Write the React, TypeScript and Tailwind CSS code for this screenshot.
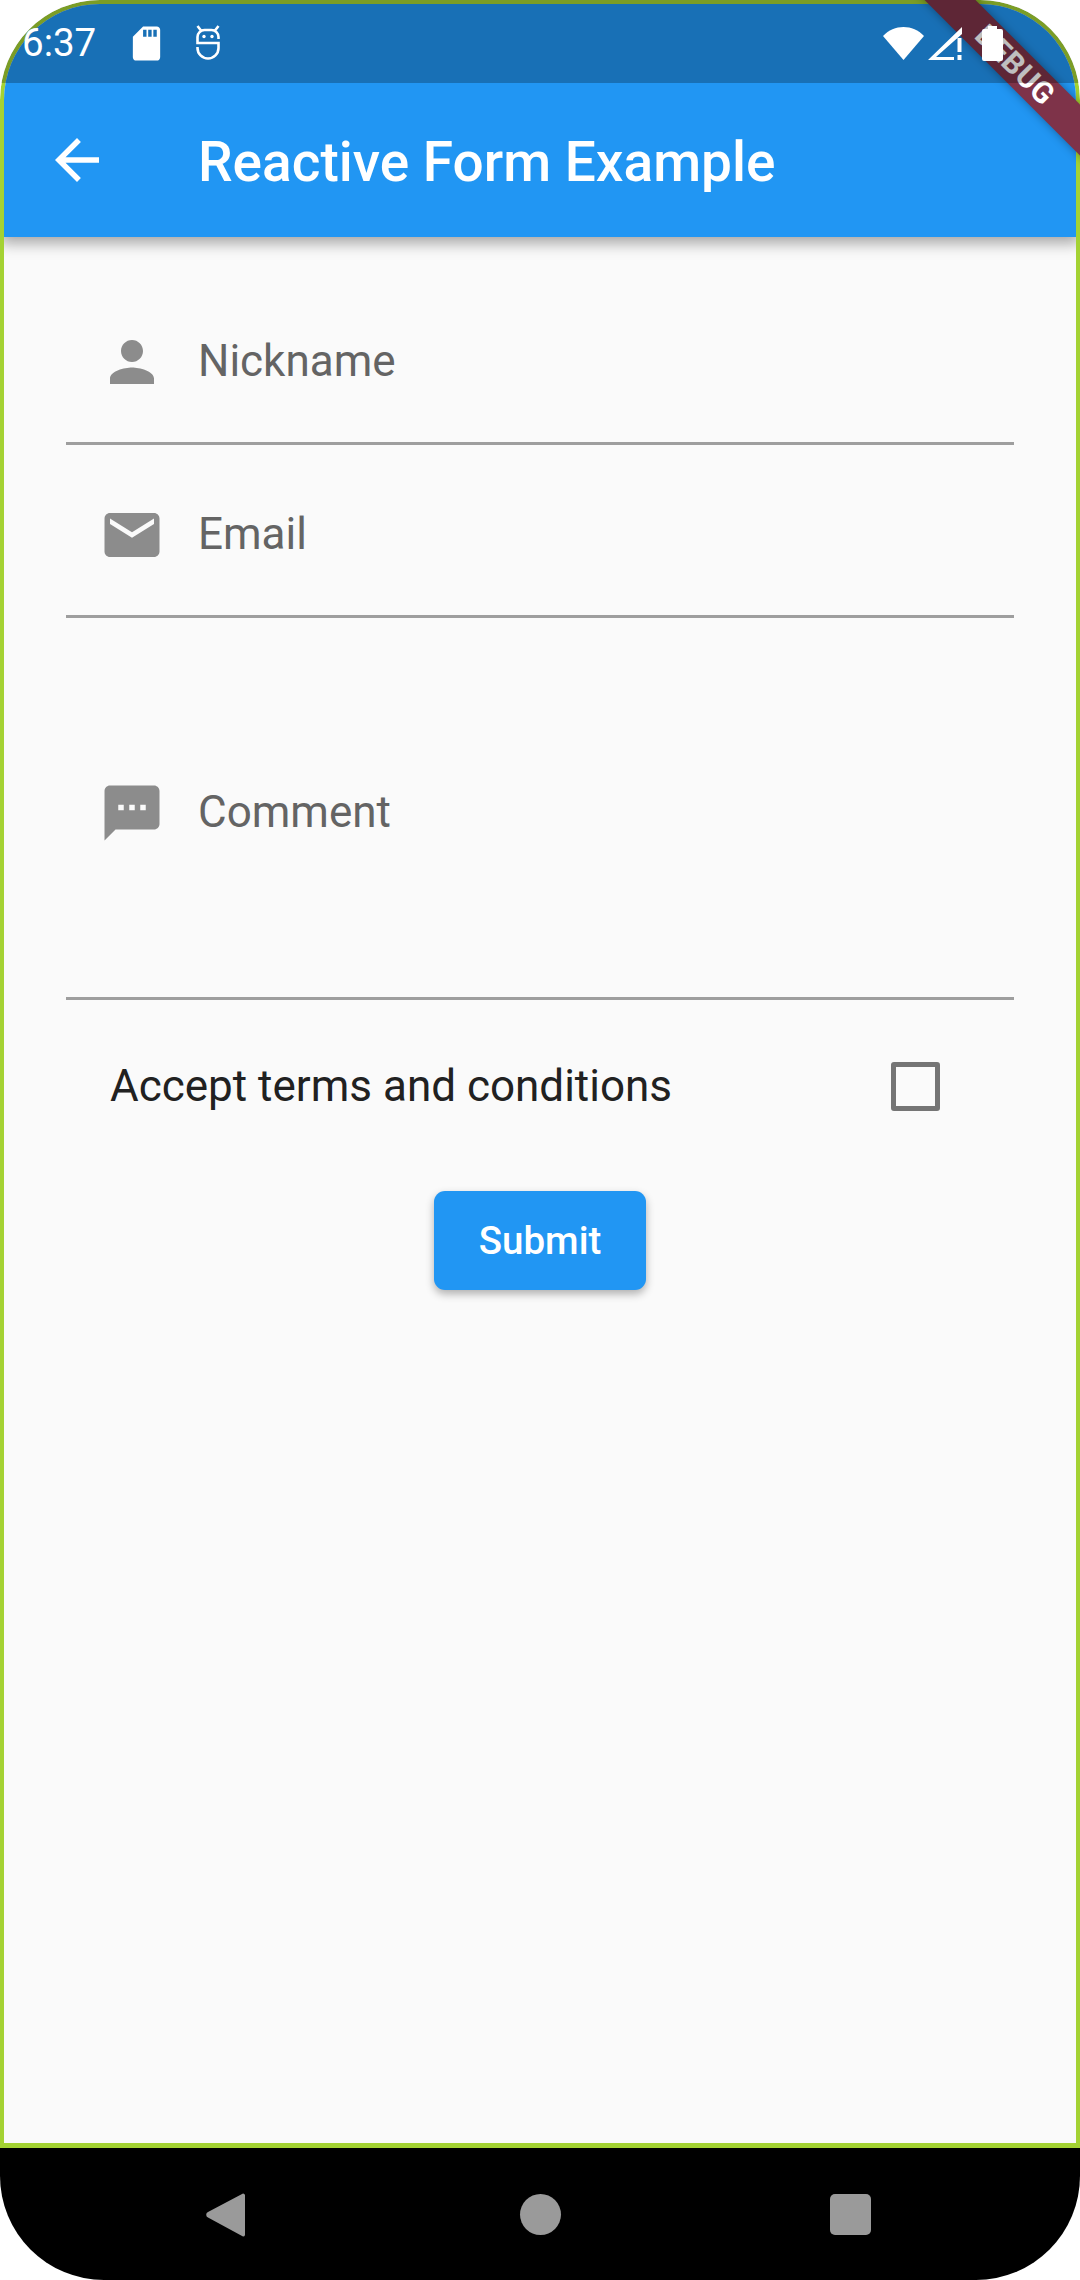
import { MdArrowBack, MdEmail, MdPerson, MdSdCard, MdSms } from "react-icons/md";
import type { ComponentType } from "react";

const roboto = "font-['Roboto',sans-serif]";

/* ── Status bar icons ──────────────────────────────────── */

function RobotHead() {
  return (
    <svg width="26" height="36" viewBox="0 0 26 36" fill="none" stroke="white" strokeWidth="2.6" className="block">
      <path d="M2.5 1l3.5 4.5M23.5 1L20 5.5" />
      <path d="M23.5 14V12A7 7 0 0 0 16.5 5H9.5A7 7 0 0 0 2.5 12V18H23.5V23A10.5 10.5 0 0 1 2.5 23V22" />
      <circle cx="9" cy="11.5" r="1.7" fill="white" stroke="none" />
      <circle cx="17" cy="11.5" r="1.7" fill="white" stroke="none" />
    </svg>
  );
}

function StatusRight() {
  return (
    <div className="flex items-center">
      <svg width="41" height="33" viewBox="0 0 41 33" className="mr-[4px]">
        <path d="M0 9C11 -3 30 -3 41 9L20.5 33Z" fill="white" />
      </svg>
      <svg width="34" height="33" viewBox="0 0 34 33" className="mr-[20px]">
        <path d="M34 0v7L8 30h18v3H0Z" fill="white" />
        <path d="M29.5 11h4v14h-4zM29.5 28h4v5h-4z" fill="white" />
      </svg>
      <svg width="21" height="35" viewBox="0 0 21 35">
        <path d="M6 0h9v3h4a2 2 0 0 1 2 2v28a2 2 0 0 1-2 2H2a2 2 0 0 1-2-2V5a2 2 0 0 1 2-2h4Z" fill="white" />
      </svg>
    </div>
  );
}

/* ── Form ──────────────────────────────────────────────── */

function Field({
  icon: Icon,
  label,
  height,
}: {
  icon: ComponentType<{ size?: number; className?: string }>;
  label: string;
  height: string;
}) {
  return (
    <div className={`flex items-center border-b-[3px] border-[#9e9e9e] ${height}`}>
      <Icon size={66} className="ml-[33px] shrink-0 text-[#8c8c8c]" />
      <span className="ml-[33px] -translate-y-[1px] text-[44px] leading-none text-[#646464]">{label}</span>
    </div>
  );
}

export default function App() {
  return (
    <div className={`flex h-[2280px] w-[1080px] flex-col bg-white ${roboto}`}>
      <div className="relative h-[2148px] overflow-hidden rounded-t-[100px]">
        <div className="flex h-full flex-col overflow-hidden rounded-t-[100px] border-x-[4px] border-t-[4px] border-b-[5px] border-[#a4d233] bg-[#fafafa]">
          <header className="-mx-[4px] -mt-[4px] h-[237px] shrink-0 bg-[#2196f3] shadow-[0_6px_14px_rgba(0,0,0,0.35)]">
            <div className="flex h-full items-end pb-[44px]">
              <MdArrowBack size={66} className="ml-[44px] text-white" />
              <h1 className="ml-[88px] translate-y-[2px] text-[55px] leading-[66px] font-medium text-white">
                Reactive Form Example
              </h1>
            </div>
          </header>

          <form className="flex flex-col gap-[10px] px-[62px] pt-[45px]">
            <Field icon={MdPerson} label="Nickname" height="h-[163px]" />
            <Field icon={MdEmail} label="Email" height="h-[163px]" />
            <Field icon={MdSms} label="Comment" height="h-[372px]" />
            <div className="-mt-[10px] flex h-[172px] items-center justify-between pr-[74px] pl-[44px]">
              <span className="text-[44px] leading-none text-[#212121]">Accept terms and conditions</span>
              <span className="h-[49px] w-[49px] rounded-[3px] border-[5.5px] border-[#757575]" />
            </div>
            <button
              type="button"
              className="mx-auto mt-[9px] h-[99px] w-[212px] rounded-[11px] bg-[#2196f3] text-[38.5px] font-medium text-white shadow-[0_4px_8px_rgba(0,0,0,0.3)]"
            >
              Submit
            </button>
          </form>
        </div>

        {/* debug ribbon */}
        <div className="absolute top-[47px] left-[865px] flex h-[36px] w-[300px] rotate-45 items-center justify-center bg-[#7e3349] shadow-[0_0_10px_rgba(0,0,0,0.35)]">
          <span className="text-[30px] leading-none font-bold tracking-[0.5px] text-white">DEBUG</span>
        </div>

        {/* status bar */}
        <div className="absolute inset-x-0 top-0 flex h-[83px] items-center justify-between bg-black/25 pt-[3px] pr-[77px] pl-[22px]">
          <div className="flex items-center">
            <span className="text-[38.5px] leading-none text-white">6:37</span>
            <MdSdCard size={41} className="ml-[30px] text-white" />
            <div className="ml-[28px]">
              <RobotHead />
            </div>
          </div>
          <StatusRight />
        </div>
      </div>

      {/* nav bar */}
      <nav className="flex h-[132px] items-start rounded-b-[104px] bg-black pt-[44px]">
        <svg width="40" height="46" viewBox="0 0 40 46" className="ml-[206px]">
          <path d="M37 1.5L2 20a3 3 0 0 0 0 5.5L37 44.5a2 2 0 0 0 2-1.5V3a2 2 0 0 0-2-1.5Z" fill="#9a9a9a" />
        </svg>
        <span className="mt-[2px] ml-[274px] h-[41px] w-[41px] rounded-full bg-[#9a9a9a]" />
        <span className="mt-[2px] ml-[269px] h-[41px] w-[41px] rounded-[5px] bg-[#9a9a9a]" />
      </nav>
    </div>
  );
}
